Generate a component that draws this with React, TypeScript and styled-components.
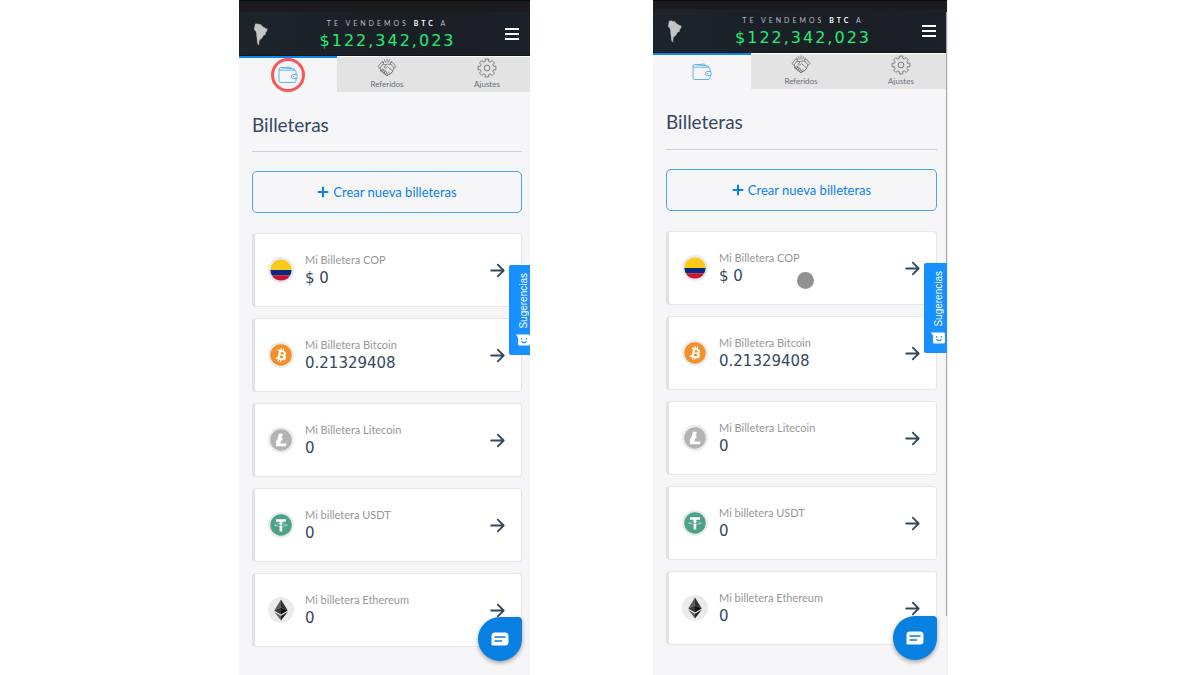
import React from 'react';
import styled, { createGlobalStyle } from 'styled-components';

const GlobalStyle = createGlobalStyle`
  *, *::before, *::after { box-sizing: border-box; }
  body { margin: 0; background: #fff; font-family: Lato, "Open Sans", sans-serif; color: #34495e; }
  h1, p, ul { margin: 0; padding: 0; }
  button { font: inherit; border: 0; padding: 0; background: none; cursor: pointer; }
  svg { display: block; }
`;

const numeric = '"DejaVu Sans", sans-serif';

const Page = styled.main`
  display: grid;
  grid-template-columns: 239fr minmax(0, 291fr) 123fr minmax(0, 295fr) 252fr;
  min-height: 100vh;
`;

const Phone = styled.section<{ $column: number; $scrolled: boolean }>`
  grid-column: ${(p) => p.$column};
  position: relative;
  overflow: hidden;
  background: #f6f6f9;
  border-right: ${(p) => (p.$scrolled ? '1px solid #f0f0f2' : '0')};
`;

const StatusStrip = styled.div<{ $height: number }>`
  height: ${(p) => p.$height}px;
  background: #1c1c1e;
  border-top: 1px solid #0c0c0d;
`;

const TopBar = styled.header`
  display: grid;
  grid-template-columns: 20px 1fr 14px;
  align-items: center;
  height: 44px;
  padding: 0 11px;
  background: linear-gradient(90deg, #1d242c, #1a1e25 60%, #1b2129);
  border-bottom: 1px solid #12151a;
`;

const Quote = styled.div`
  display: grid;
  gap: 2px;
  text-align: center;
`;

const QuoteLabel = styled.p`
  font-size: 7px;
  line-height: 12px;
  letter-spacing: 3px;
  color: #b9bdc3;
  white-space: nowrap;
  strong { color: #fff; }
`;

const QuotePrice = styled.p`
  font-family: ${numeric};
  font-size: 16px;
  line-height: 20px;
  letter-spacing: 2px;
  color: #21ec78;
  white-space: nowrap;
`;

const MenuButton = styled.button`
  display: grid;
  gap: 3px;
  width: 14px;
  span { height: 2px; background: #fff; }
`;

const Tabs = styled.nav`
  display: flex;
  height: 36px;
`;

const Tab = styled.a<{ $active?: boolean }>`
  position: relative;
  flex: 0 0 ${(p) => (p.$active ? 98 : 100)}px;
  display: flex;
  flex-direction: column;
  align-items: center;
  padding-top: ${(p) => (p.$active ? 0 : 1)}px;
  border-top: ${(p) => (p.$active ? '2px solid #0b86ea' : '1px solid #fff')};
  background: ${(p) => (p.$active ? '#f6f6f9' : '#e3e3e3')};
  color: ${(p) => (p.$active ? '#4eaee8' : '#66707c')};
  justify-content: ${(p) => (p.$active ? 'center' : 'flex-start')};
  font-size: 8px;
  line-height: 12px;
  text-decoration: none;
`;

const FocusRing = styled.span`
  position: absolute;
  top: 50%;
  left: 50%;
  width: 34px;
  height: 34px;
  transform: translate(-50%, -50%);
  border: 3px solid #fa5558;
  border-radius: 50%;
`;

const Content = styled.div<{ $right: number }>`
  padding: 20px ${(p) => p.$right}px 28px 13px;
`;

const Title = styled.h1<{ $space: number }>`
  font-size: 19px;
  line-height: 26px;
  font-weight: 400;
  padding-bottom: ${(p) => p.$space}px;
  border-bottom: 1px solid #cfcfd3;
`;

const CreateButton = styled.button`
  && {
    display: flex;
    align-items: center;
    justify-content: center;
    gap: 4px;
    width: 100%;
    height: 42px;
    margin: 19px 0 20px;
    border: 1px solid #4ba6e2;
    border-radius: 5px;
    color: #0b82e6;
    font-size: 13px;
    line-height: 18px;
  }
`;

const WalletList = styled.ul`
  display: grid;
  gap: 11px;
  list-style: none;
`;

const WalletCard = styled.a`
  position: relative;
  display: flex;
  align-items: center;
  height: 74px;
  padding: 0 16px 0 13px;
  background: #fff;
  border: 1px solid #e8e8eb;
  border-left: 3px solid #e2e2e4;
  border-radius: 4px;
  color: inherit;
  text-decoration: none;
`;

const WalletText = styled.div`
  flex: 1;
  margin-left: 11px;
`;

const WalletName = styled.p`
  font-size: 11px;
  line-height: 16px;
  color: #979797;
`;

const WalletAmount = styled.p`
  font-family: ${numeric};
  font-size: 15px;
  line-height: 20px;
`;

const TouchDot = styled.span`
  position: absolute;
  top: 40px;
  left: 48%;
  width: 17px;
  height: 17px;
  border-radius: 50%;
  background: #919191;
`;

const Feedback = styled.button<{ $width: number; $top: number }>`
  && {
    position: absolute;
    top: ${(p) => p.$top}px;
    right: 0;
    display: flex;
    flex-direction: column;
    align-items: flex-start;
    justify-content: space-between;
    width: ${(p) => p.$width}px;
    height: 90px;
    padding: 8px 0 9px 7px;
    overflow: hidden;
    background: #1890ff;
    border-radius: 2px 0 0 2px;
    color: #fff;
    font: 400 10px/15px "Liberation Sans", sans-serif;
  }
`;

const VerticalLabel = styled.span`
  writing-mode: vertical-rl;
  transform: rotate(180deg);
`;

const ChatButton = styled.button<{ $right: number; $bottom: number }>`
  && {
    position: absolute;
    right: ${(p) => p.$right}px;
    bottom: ${(p) => p.$bottom}px;
    display: grid;
    place-items: center;
    width: 44px;
    height: 44px;
    background: #0780e2;
    border-radius: 22px 4px 22px 22px;
    box-shadow: 0 2px 4px rgba(0, 0, 0, 0.35);
  }
`;

const ScrollThumb = styled.span`
  position: absolute;
  top: 12px;
  right: 0;
  width: 1px;
  height: 604px;
  background: #a5a5a8;
`;

const ContinentIcon = () => (
  <svg width="20" height="24" viewBox="0 0 20 24" aria-hidden="true">
    <path
      d="M5 2.2 7 1.5l2 .8 2 .2 1.200 1.700 3.300 2 1.900.8-.4 2-1.200 1.500-.3 2-2 1.100-1 2-1.600 1.600-1.200.7-.4 2-.4 1.400.4 1.300-1 .3-1-1.800-.2-3.200-.5-4-.2-2.500-.5-2.200L3.900 7.400 4.600 5z"
      fill="#c3c5c8"
      stroke="#8d9196"
      strokeWidth=".6"
      strokeDasharray="1 1"
    />
  </svg>
);

const WalletIcon = () => (
  <svg width="20" height="18" viewBox="0 0 20 18" fill="none" stroke="currentColor" strokeWidth=".9" strokeLinejoin="round" aria-hidden="true">
    <path d="M1 3.500v11.300q0 1.700 1.700 1.700h13.600q1.700 0 1.700-1.700v-2.300M18 8.500V5.800q0-1.600-1.600-1.600H2.200Q1 4.200 1 3q0-1.300 1.500-1.400L16.500 3v1.200M3 1.800 12.500 1l1 1.600" />
    <path d="M19 8.500h-3.600a2 2 0 0 0 0 4H19zM14.900 10.500h1.300" />
  </svg>
);

const HandshakeIcon = () => (
  <svg width="20" height="20" viewBox="0 0 20 20" fill="none" stroke="#6f6f6f" strokeWidth=".8" strokeLinecap="round" strokeLinejoin="round" aria-hidden="true">
    <path d="M10 1v3M7.500 1.700l.8 2.400M12.500 1.700l-.8 2.400M5.600 3.200l1 1.500M14.400 3.200l-1 1.500" />
    <path d="M4.600 4.200 1 8.600l1.800 1.600 3.600-4.400zM15.400 4.200 19 8.600l-1.800 1.600-3.600-4.400z" />
    <path d="M6.200 6.200 9 6.800 7.200 9.300q.8 1.400 2.300.3l1-1 5 4.200q.6 1.200-.8 1.700M9 6.800l1.500-.6 3.300.1M3.200 10l.8 3M16.800 10l-1 3" />
    <path d="M4 12.700 5.300 11q1.200-.4 1.300.8l-1.300 1.900q-1.500.5-1.300-1zM5.500 13.800 6.900 12q1.400-.2 1.300 1l-1.400 2q-1.500.3-1.300-1.200zM7 15.200 8.400 13.500q1.300-.2 1.200 1l-1.200 1.800Q7 16.700 7 15.200zM8.700 16.400l1-1.100q1.300 0 1 1.200l-.9 1.200q-1.200 0-1.100-1.300zM14.700 14.500q-.3 1.300-1.600 1.200l-1.500-1.300M13.100 15.700q-.3 1.200-1.500 1l-.8-.6M11.600 16.700q-.3 1.200-1.700 1" />
  </svg>
);

const polar = (radius: number, degrees: number) => {
  const angle = (degrees * Math.PI) / 180;
  return `${(10 + radius * Math.cos(angle)).toFixed(2)} ${(10 + radius * Math.sin(angle)).toFixed(2)}`;
};

// Eight teeth, each traced as valley, rise, tip and fall.
const gearOutline =
  'M' +
  Array.from({ length: 8 }, (_, i) => i * 45)
    .map((a) => [polar(6.8, a - 15), polar(9.1, a - 11), polar(9.1, a + 11), polar(6.8, a + 15)].join('L'))
    .join('L') +
  'Z';

const GearIcon = () => (
  <svg width="20" height="20" viewBox="0 0 20 20" fill="none" stroke="#6f6f6f" strokeWidth=".9" strokeLinejoin="round" aria-hidden="true">
    <path d={gearOutline} />
    <circle cx="10" cy="10" r="2.900" />
  </svg>
);

const PlusIcon = () => (
  <svg width="12" height="12" viewBox="0 0 12 12" stroke="currentColor" strokeWidth="2" strokeLinecap="round" aria-hidden="true">
    <path d="M6 1.500v9M1.500 6h9" />
  </svg>
);

const ArrowIcon = () => (
  <svg width="15" height="15" viewBox="0 0 15 15" fill="none" stroke="#34495e" strokeWidth="1.800" strokeLinecap="round" strokeLinejoin="round" aria-hidden="true">
    <path d="M1.200 7.500h12.300M7.800 1.600l5.900 5.900-5.900 5.900" />
  </svg>
);

const SmileIcon = () => (
  <svg width="15" height="12" viewBox="0 0 15 12" aria-hidden="true">
    <path d="M0 .5h12.500Q14 .5 14 2v8q0 1.500-1.500 1.500H3.500Q2 11.500 2 10V3.500z" fill="#fff" />
    <path d="M5.600 4v1.400M10.400 4v1.400M5.400 7.300q2.600 2.600 5.200 0" fill="none" stroke="#1890ff" strokeWidth="1.200" />
  </svg>
);

const ChatIcon = () => (
  <svg width="18" height="14" viewBox="0 0 18 14" aria-hidden="true">
    <path d="M4 .5h10q3.500 0 3.500 3.500v6q0 3.500-3.500 3.500H1.500q-1 0-1-1V4Q.5.5 4 .5z" fill="#fff" />
    <path d="M4 5h10M4 9h6.500" stroke="#0780e2" strokeWidth="1.600" strokeLinecap="round" />
  </svg>
);

type Coin = 'cop' | 'btc' | 'ltc' | 'usdt' | 'eth';

const coinArt: Record<Coin, React.ReactNode> = {
  cop: (
    <>
      <path d="M3 16a13 13 0 0 1 26 0z" fill="#fcca16" />
      <path d="M3 16h26a13 13 0 0 1-1.700 6.500H4.700A13 13 0 0 1 3 16z" fill="#082a80" />
      <path d="M4.700 22.500h22.600a13 13 0 0 1-22.600 0z" fill="#c8142e" />
    </>
  ),
  btc: (
    <>
      <circle cx="16" cy="16" r="13.200" fill="#f3902a" />
      <path
        transform="translate(2.200 2.200) scale(.87)"
        fill="#fff"
        fillRule="evenodd"
        d="M23.189 14.020c.314-2.096-1.283-3.223-3.465-3.975l.708-2.840-1.728-.430-.690 2.765c-.454-.114-.920-.220-1.385-.326l.695-2.783L15.596 6l-.708 2.839c-.376-.086-.746-.170-1.104-.260l.002-.009-2.384-.595-.460 1.846s1.283.294 1.256.312c.700.175.826.638.805 1.006l-.806 3.235c.048.012.110.030.180.057l-.183-.045-1.130 4.532c-.086.212-.303.531-.793.410.018.025-1.256-.313-1.256-.313l-.858 1.978 2.250.561c.418.105.828.215 1.231.318l-.715 2.872 1.727.430.708-2.840c.472.127.930.245 1.378.357l-.706 2.828 1.728.430.715-2.866c2.948.558 5.164.333 6.097-2.333.752-2.146-.037-3.385-1.588-4.192 1.130-.260 1.980-1.003 2.207-2.538zm-3.950 5.538c-.533 2.147-4.148.986-5.320.695l.950-3.805c1.172.293 4.929.872 4.370 3.110zm.535-5.569c-.487 1.953-3.495.960-4.470.717l.860-3.450c.975.243 4.118.696 3.610 2.733z"
      />
    </>
  ),
  ltc: (
    <>
      <circle cx="16" cy="16" r="13.200" fill="#b3b3b3" />
      <path
        transform="translate(.5 .5) scale(.97)"
        fill="#fff"
        d="M10.427 19.214L9 19.768l.688-2.759 1.444-.580L13.213 8h5.129l-1.519 6.196 1.410-.571-.680 2.750-1.427.571-.848 3.483H23L22.127 24H9.252z"
      />
    </>
  ),
  usdt: (
    <>
      <circle cx="16" cy="16" r="13.200" fill="#4aa287" />
      <path
        transform="translate(2.500 2.500) scale(.84)"
        fill="#fff"
        d="M17.922 17.383v-.002c-.110.008-.677.042-1.942.042-1.010 0-1.721-.030-1.971-.042v.003c-3.888-.171-6.790-.848-6.790-1.658 0-.809 2.902-1.486 6.790-1.660v2.644c.254.018.982.061 1.988.061 1.207 0 1.812-.050 1.925-.060v-2.643c3.880.173 6.775.850 6.775 1.658 0 .810-2.895 1.485-6.775 1.657m0-3.590v-2.366h5.414V7.819H8.595v3.608h5.414v2.365c-4.400.202-7.709 1.074-7.709 2.118 0 1.044 3.309 1.915 7.709 2.118v7.582h3.913v-7.584c4.393-.202 7.694-1.073 7.694-2.116 0-1.043-3.301-1.914-7.694-2.117"
      />
    </>
  ),
  eth: (
    <>
      <path d="M16 3v9.800L7.700 16.600z" fill="#5c5c5c" />
      <path d="M16 3v9.800l8.300 3.800z" fill="#2f2f2f" />
      <path d="M7.700 16.600 16 12.800v8.700z" fill="#383838" />
      <path d="M24.300 16.600 16 12.800v8.700z" fill="#131313" />
      <path d="M7.700 18.300 16 23.200V29z" fill="#646464" />
      <path d="M24.300 18.300 16 23.200V29z" fill="#222" />
    </>
  ),
};

const CoinIcon = ({ coin }: { coin: Coin }) => (
  <svg width="26" height="26" viewBox="0 0 32 32" aria-hidden="true">
    <circle cx="16" cy="16" r="16" fill="#ebebec" />
    {coinArt[coin]}
  </svg>
);

const wallets: { coin: Coin; name: string; amount: string }[] = [
  { coin: 'cop', name: 'Mi Billetera COP', amount: '$ 0' },
  { coin: 'btc', name: 'Mi Billetera Bitcoin', amount: '0.21329408' },
  { coin: 'ltc', name: 'Mi Billetera Litecoin', amount: '0' },
  { coin: 'usdt', name: 'Mi billetera USDT', amount: '0' },
  { coin: 'eth', name: 'Mi billetera Ethereum', amount: '0' },
];

function WalletScreen({ step }: { step: 'select' | 'touch' }) {
  const touch = step === 'touch';
  return (
    <Phone $column={touch ? 4 : 2} $scrolled={touch}>
      <StatusStrip $height={touch ? 9 : 12} />
      <TopBar>
        <ContinentIcon />
        <Quote>
          <QuoteLabel>
            TE VENDEMOS <strong>BTC</strong> A
          </QuoteLabel>
          <QuotePrice>$122,342,023</QuotePrice>
        </Quote>
        <MenuButton type="button" aria-label="Menú">
          <span />
          <span />
          <span />
        </MenuButton>
      </TopBar>
      <Tabs>
        <Tab href="#billeteras" $active aria-label="Billeteras">
          <WalletIcon />
          {!touch && <FocusRing />}
        </Tab>
        <Tab href="#referidos">
          <HandshakeIcon />
          Referidos
        </Tab>
        <Tab href="#ajustes">
          <GearIcon />
          Ajustes
        </Tab>
      </Tabs>
      <Content $right={touch ? 10 : 8}>
        <Title $space={touch ? 14 : 13}>Billeteras</Title>
        <CreateButton type="button">
          <PlusIcon />
          Crear nueva billeteras
        </CreateButton>
        <WalletList>
          {wallets.map((wallet) => (
            <li key={wallet.coin}>
              <WalletCard href={`#${wallet.coin}`}>
                <CoinIcon coin={wallet.coin} />
                <WalletText>
                  <WalletName>{wallet.name}</WalletName>
                  <WalletAmount>{wallet.amount}</WalletAmount>
                </WalletText>
                <ArrowIcon />
                {touch && wallet.coin === 'cop' && <TouchDot />}
              </WalletCard>
            </li>
          ))}
        </WalletList>
      </Content>
      {touch && <ScrollThumb />}
      <Feedback type="button" $width={touch ? 23 : 21} $top={touch ? 263 : 265}>
        <VerticalLabel>Sugerencias</VerticalLabel>
        <SmileIcon />
      </Feedback>
      <ChatButton type="button" aria-label="Chat" $right={touch ? 10 : 8} $bottom={touch ? 15 : 14}>
        <ChatIcon />
      </ChatButton>
    </Phone>
  );
}

export default function App() {
  return (
    <>
      <GlobalStyle />
      <Page>
        <WalletScreen step="select" />
        <WalletScreen step="touch" />
      </Page>
    </>
  );
}
